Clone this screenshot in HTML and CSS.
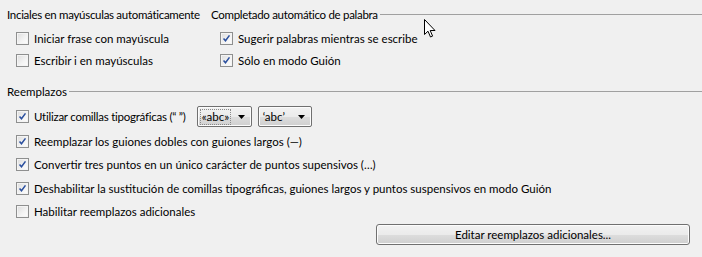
FILE: index.html
```html
<!DOCTYPE html>
<html>
<head>
<meta charset="utf-8">
<link rel="stylesheet" href="styles.css">
</head>
<body>
<div class="panel">
  <div class="top">
    <div class="group g1">
      <div class="heading tight"><span>Inciales en mayúsculas automáticamente</span></div>
      <div class="items">
        <label class="row"><span class="cb"></span>Iniciar frase con mayúscula</label>
        <label class="row"><span class="cb"></span>Escribir i en mayúsculas</label>
      </div>
    </div>
    <div class="group g2">
      <div class="heading tight"><span>Completado automático de palabra</span><i class="rule"></i></div>
      <div class="items">
        <label class="row"><span class="cb on"><svg viewBox="0 0 13 13"><path d="M3 6.5 L5.3 9.2 L10 2.8" fill="none" stroke="#2a4f9e" stroke-width="1.8"/></svg></span>Sugerir palabras mientras se escribe</label>
        <label class="row"><span class="cb on"><svg viewBox="0 0 13 13"><path d="M3 6.5 L5.3 9.2 L10 2.8" fill="none" stroke="#2a4f9e" stroke-width="1.8"/></svg></span>Sólo en modo Guión</label>
      </div>
    </div>
  </div>
  <div class="group g3">
    <div class="heading"><span>Reemplazos</span><i class="rule"></i></div>
    <div class="items repl">
      <div class="row quotes">
        <span class="cb on"><svg viewBox="0 0 13 13"><path d="M3 6.5 L5.3 9.2 L10 2.8" fill="none" stroke="#2a4f9e" stroke-width="1.8"/></svg></span>
        <span class="lbl">Utilizar comillas tipográficas (“ ”)</span>
        <span class="select s1"><span class="val focus">«abc»</span><svg class="arr" viewBox="0 0 7 4"><path d="M0 0 H7 L3.5 4 Z" fill="#000"/></svg></span>
        <span class="select s2"><span class="val">‘abc’</span><svg class="arr" viewBox="0 0 7 4"><path d="M0 0 H7 L3.5 4 Z" fill="#000"/></svg></span>
      </div>
      <label class="row"><span class="cb on"><svg viewBox="0 0 13 13"><path d="M3 6.5 L5.3 9.2 L10 2.8" fill="none" stroke="#2a4f9e" stroke-width="1.8"/></svg></span>Reemplazar los guiones dobles con guiones largos (—)</label>
      <label class="row"><span class="cb on"><svg viewBox="0 0 13 13"><path d="M3 6.5 L5.3 9.2 L10 2.8" fill="none" stroke="#2a4f9e" stroke-width="1.8"/></svg></span>Convertir tres puntos en un único carácter de puntos supensivos (…)</label>
      <label class="row"><span class="cb on"><svg viewBox="0 0 13 13"><path d="M3 6.5 L5.3 9.2 L10 2.8" fill="none" stroke="#2a4f9e" stroke-width="1.8"/></svg></span>Deshabilitar la sustitución de comillas tipográficas, guiones largos y puntos suspensivos en modo Guión</label>
      <label class="row"><span class="cb"></span>Habilitar reemplazos adicionales</label>
    </div>
    <div class="actions">
      <button class="btn">Editar reemplazos adicionales...</button>
    </div>
  </div>
  <svg class="cursor" width="12" height="19" viewBox="0 0 12 19"><path d="M0.5 0.5 V15.5 L4 12.2 L6.5 18 L8.6 17.1 L6.2 11.5 H11 Z" fill="#fff" stroke="#000" stroke-width="1"/></svg>
</div>
</body>
</html>
```
FILE: styles.css
```css
html, body {
  margin: 0;
  padding: 0;
  background: #f0f0f0;
}
body {
  font-family: Lato, "Open Sans", "Noto Sans", sans-serif;
  font-size: 11.5px;
  color: #000;
  width: 702px;
  height: 257px;
  overflow: hidden;
}
.panel {
  position: relative;
  padding: 6px 0 0 7px;
}
.top {
  display: flex;
}
.g1 {
  width: 204px;
  flex: none;
}
.g2 {
  flex: 1;
}
.heading {
  display: flex;
  align-items: center;
  height: 16px;
  white-space: nowrap;
}
.heading.tight span {
  letter-spacing: -0.3px;
}
.rule {
  flex: 1;
  height: 0;
  border-top: 1px solid #a0a0a0;
  margin-left: 2px;
}
.items {
  display: flex;
  flex-direction: column;
  gap: 7px;
  padding: 9px 0 0 9px;
}
.row {
  display: flex;
  align-items: center;
  height: 15px;
  white-space: nowrap;
}
.cb {
  width: 11px;
  height: 11px;
  border: 1px solid #8e8f8f;
  background: linear-gradient(135deg, #dcdcdc 0%, #f4f4f4 60%, #fdfdfd 100%);
  box-shadow: inset 0 0 0 1px #f4f4f4;
  margin-right: 5px;
  flex: none;
  display: flex;
  align-items: center;
  justify-content: center;
}
.cb svg {
  width: 11px;
  height: 11px;
}
.g3 {
  margin-top: 15px;
}
.repl {
  gap: 8.6px;
  padding-top: 11px;
}
.quotes {
  height: 21px;
  margin-top: -4px;
  margin-bottom: -2px;
}
.lbl {
  margin-right: 11px;
  letter-spacing: -0.25px;
}
.select {
  display: flex;
  align-items: center;
  border: 1px solid #707070;
  border-radius: 2px;
  background: linear-gradient(#f2f2f2 0%, #ebebeb 50%, #dddddd 51%, #cfcfcf 100%);
  box-shadow: inset 0 0 0 1px #fcfcfc;
  padding: 0 6px 0 2px;
  margin-right: 6px;
  box-sizing: border-box;
  height: 21px;
  flex: none;
}
.s1 { width: 55px; }
.s2 { width: 54px; }
.val {
  margin-right: auto;
  padding: 0 1px;
  line-height: 14px;
  border: 1px dotted transparent;
}
.val.focus {
  border-color: #8a8a8a;
}
.arr {
  width: 7px;
  height: 4px;
}
.actions {
  display: flex;
  justify-content: flex-end;
  padding: 5px 12px 0 0;
}
.btn {
  width: 314px;
  height: 21px;
  font-family: inherit;
  font-size: 11.5px;
  color: #000;
  border: 1px solid #707070;
  border-radius: 3px;
  background: linear-gradient(#f2f2f2 0%, #ebebeb 50%, #dddddd 51%, #cfcfcf 100%);
  box-shadow: inset 0 0 0 1px #fcfcfc;
  padding: 0;
}
.cursor {
  position: absolute;
  left: 424px;
  top: 19px;
}
```
